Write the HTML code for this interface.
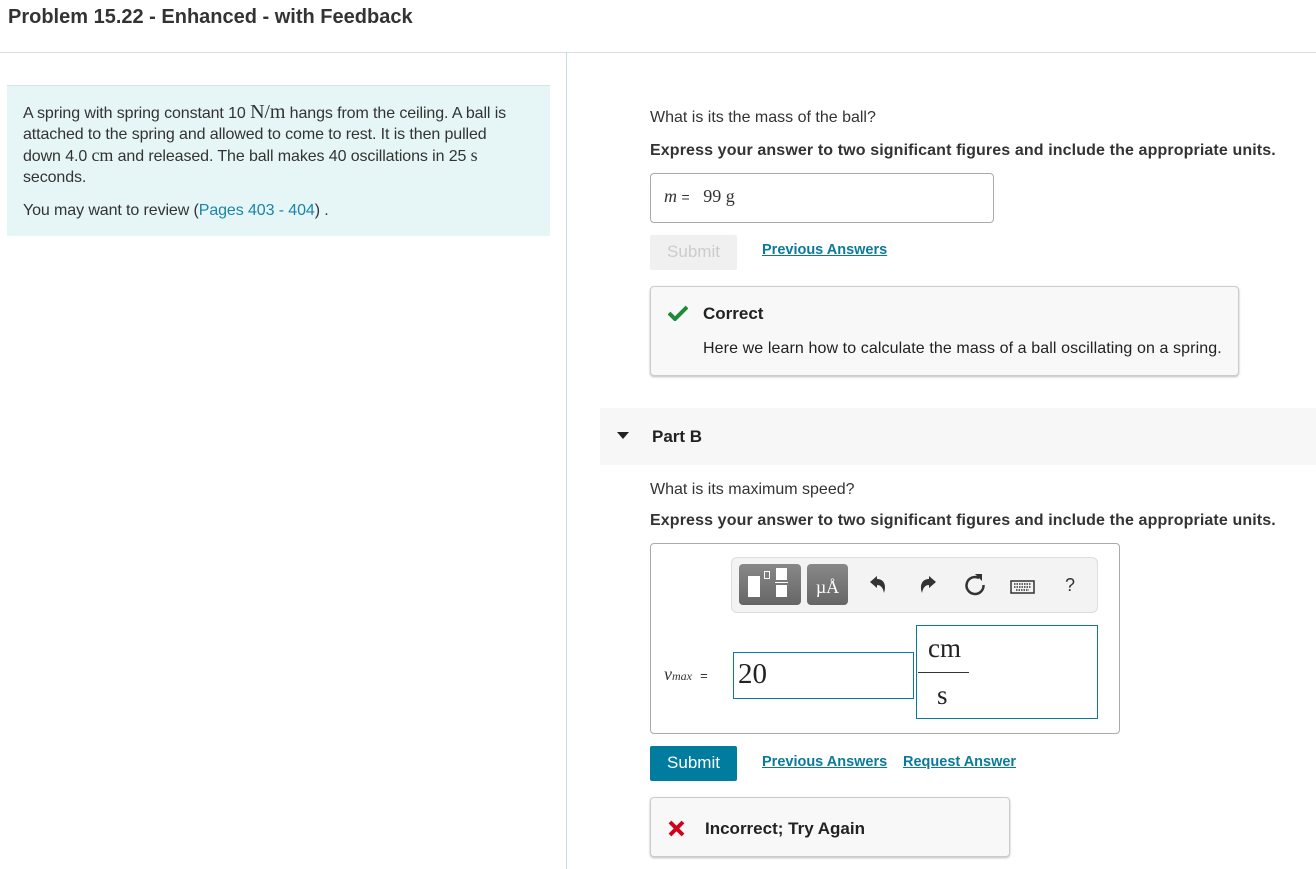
<!DOCTYPE html>
<html><head><meta charset="utf-8"><style>
*{margin:0;padding:0;box-sizing:border-box}
body{width:1316px;height:869px;position:relative;background:#fff;font-family:"Liberation Sans",Arial,sans-serif;color:#333;overflow:hidden}
.a{position:absolute;white-space:nowrap}
.s{font-family:"Liberation Serif",serif}
.lk{font-weight:bold;font-size:14.5px;text-decoration:underline;color:#0a7a9c}
</style></head><body>
<div class="a" style="left:8px;top:6px;font-size:20px;font-weight:bold;color:#333">Problem 15.22 - Enhanced - with Feedback</div>
<div class="a" style="left:0;top:52px;width:1316px;height:1px;background:#ddd"></div>
<div class="a" style="left:566px;top:52px;width:1px;height:817px;background:#c8dbe3"></div>
<div class="a" style="left:7px;top:85px;width:543px;height:151px;background:#e6f5f6;border-top:1px solid #d4e4e6"></div>
<div class="a" style="left:23px;top:102px;font-size:16px;line-height:21px;color:#333;white-space:normal;width:505px;letter-spacing:-0.1px">A spring with spring constant 10 <span class="s" style="font-size:20px">N/m</span> hangs from the ceiling. A ball is attached to the spring and allowed to come to rest. It is then pulled down 4.0 <span class="s" style="font-size:18px">cm</span> and released. The ball makes 40 oscillations in 25 <span class="s" style="font-size:18px">s</span><br>seconds.</div>
<div class="a" style="left:23px;top:202px;font-size:16px;letter-spacing:-0.1px">You may want to review (<span style="color:#1a85a8">Pages 403 - 404</span>) .</div>

<div class="a" style="left:650px;top:109px;font-size:16px">What is its the mass of the ball?</div>
<div class="a" style="left:650px;top:142px;font-size:16px;font-weight:bold;letter-spacing:0.12px">Express your answer to two significant figures and include the appropriate units.</div>
<div class="a" style="left:650px;top:173px;width:344px;height:50px;border:1px solid #aaa;border-radius:4px"></div>
<div class="a s" style="left:664px;top:186px;font-size:18px"><i>m</i> <span style="font-family:'Liberation Sans';font-size:14px">=</span> &nbsp; 99 g</div>
<div class="a" style="left:650px;top:235px;width:87px;height:35px;background:#f0f0f0;border-radius:2px;color:#ccc;font-size:17px;text-align:center;line-height:34px">Submit</div>
<div class="a lk" style="left:762px;top:242px">Previous Answers</div>
<div class="a" style="left:650px;top:286px;width:589px;height:90px;background:#f8f8f8;border:1px solid #ccc;border-radius:4px;box-shadow:0 1px 2px #bbb"></div>
<svg class="a" style="left:668px;top:305px" width="20" height="16" viewBox="0 0 20 16"><path d="M1 8 L7 14 L19 2" fill="none" stroke="#1e8a3a" stroke-width="4"/></svg>
<div class="a" style="left:703px;top:304px;font-size:17px;font-weight:bold;color:#222">Correct</div>
<div class="a" style="left:703px;top:340px;font-size:16px;color:#222;letter-spacing:0.1px">Here we learn how to calculate the mass of a ball oscillating on a spring.</div>

<div class="a" style="left:600px;top:408px;width:716px;height:57px;background:#f7f7f7"></div>
<div class="a" style="left:617px;top:432px;width:0;height:0;border-left:6px solid transparent;border-right:6px solid transparent;border-top:7px solid #222"></div>
<div class="a" style="left:652px;top:427px;font-size:17px;font-weight:bold;color:#222">Part B</div>

<div class="a" style="left:650px;top:481px;font-size:16px">What is its maximum speed?</div>
<div class="a" style="left:650px;top:512px;font-size:16px;font-weight:bold;letter-spacing:0.12px">Express your answer to two significant figures and include the appropriate units.</div>
<div class="a" style="left:650px;top:543px;width:470px;height:191px;border:1px solid #aaa;border-radius:4px"></div>
<div class="a" style="left:731px;top:557px;width:367px;height:56px;background:#f3f3f3;border:1px solid #ddd;border-radius:6px"></div>
<div class="a" style="left:739px;top:564px;width:62px;height:41px;background:linear-gradient(#888,#666);border-radius:4px"></div>
<div class="a" style="left:748px;top:576px;width:12px;height:21px;background:#fff"></div>
<div class="a" style="left:764px;top:571px;width:6px;height:8px;border:1px solid #fff"></div>
<div class="a" style="left:776px;top:568px;width:11px;height:12px;background:#fff"></div>
<div class="a" style="left:775px;top:582px;width:13px;height:1px;background:#fff"></div>
<div class="a" style="left:776px;top:585px;width:11px;height:12px;background:#fff"></div>
<div class="a" style="left:807px;top:564px;width:41px;height:41px;background:linear-gradient(#888,#666);border-radius:4px;color:#fff;text-align:center;line-height:46px;font-family:'Liberation Serif';font-size:18px">µÅ</div>
<svg class="a" style="left:869px;top:574px" width="20" height="22" viewBox="0 0 20 22"><path d="M1 8 L8 2 L8 5 C14 5 18 10 15 19 C14 14 12 11 8 11 L8 14 Z" fill="#333"/></svg>
<svg class="a" style="left:917px;top:574px" width="20" height="22" viewBox="0 0 20 22"><path d="M19 8 L12 2 L12 5 C6 5 2 10 5 19 C6 14 8 11 12 11 L12 14 Z" fill="#333"/></svg>
<svg class="a" style="left:962px;top:572px" width="26" height="26" viewBox="0 0 26 26"><path d="M17 6 A8.5 8.5 0 1 0 21.5 13" fill="none" stroke="#333" stroke-width="2.5"/><path d="M13 2 L20 2 L20 9 Z" fill="#333"/></svg>
<svg class="a" style="left:1010px;top:580px" width="25" height="14" viewBox="0 0 25 14"><rect x="1" y="1" width="23" height="12" fill="none" stroke="#333" stroke-width="1.5"/><path d="M4 4h17M4 7h17M6 10h13" stroke="#333" stroke-width="1.5" stroke-dasharray="1.5 1"/></svg>
<div class="a" style="left:1065px;top:575px;font-size:18px;color:#333">?</div>
<div class="a s" style="left:664px;top:664px;font-size:18px;font-style:italic">v<span style="font-size:12px">max</span> <span style="font-style:normal;font-family:'Liberation Sans';font-size:13px">&nbsp;=</span></div>
<div class="a" style="left:733px;top:652px;width:181px;height:47px;border:1px solid #0a7a9c"></div>
<div class="a s" style="left:738px;top:658px;font-size:29px;color:#222">20</div>
<div class="a" style="left:916px;top:625px;width:182px;height:94px;border:1px solid #0a7a9c"></div>
<div class="a s" style="left:928px;top:633px;font-size:27px;color:#222">cm</div>
<div class="a" style="left:918px;top:672px;width:51px;height:1px;background:#333"></div>
<div class="a s" style="left:937px;top:680px;font-size:27px;color:#222">s</div>

<div class="a" style="left:650px;top:746px;width:87px;height:35px;background:#007c9e;border-radius:2px;color:#fff;font-size:17px;text-align:center;line-height:34px">Submit</div>
<div class="a lk" style="left:762px;top:754px">Previous Answers</div>
<div class="a lk" style="left:903px;top:754px">Request Answer</div>
<div class="a" style="left:650px;top:797px;width:360px;height:60px;background:#f8f8f8;border:1px solid #ccc;border-radius:4px;box-shadow:0 1px 2px #bbb"></div>
<svg class="a" style="left:668px;top:820px" width="17" height="17" viewBox="0 0 17 17"><path d="M2 2 L15 15 M15 2 L2 15" stroke="#d0021b" stroke-width="4"/></svg>
<div class="a" style="left:705px;top:819px;font-size:17px;font-weight:bold;color:#222">Incorrect; Try Again</div>
</body></html>
